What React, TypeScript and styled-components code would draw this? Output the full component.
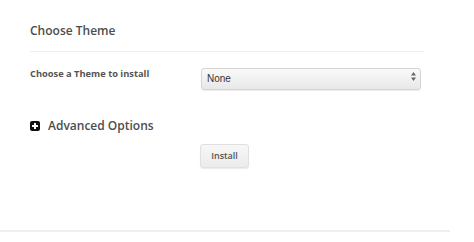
import React from "react";
import styled, { createGlobalStyle } from "styled-components";

const Global = createGlobalStyle`
  html, body { margin: 0; padding: 0; background: #fff; }
  body { font-family: "Open Sans", "Liberation Sans", sans-serif; color: #555; }
`;

const Page = styled.div`
  width: 450px;
  height: 232px;
  box-sizing: border-box;
  border-bottom: 2px solid #efefef;
  padding: 23px 26px 0 30px;
`;

const Heading = styled.h2`
  margin: 0;
  font-size: 12px;
  line-height: 16px;
  font-weight: 600;
  color: #4d4d4d;
  padding-bottom: 12px;
  border-bottom: 1px solid #eee;
`;

const FormRow = styled.div`
  display: grid;
  grid-template-columns: 171px 220px;
  align-items: start;
  margin-top: 13px;
`;

const Label = styled.label`
  font-size: 9.3px;
  font-weight: 700;
  line-height: 14px;
  color: #555;
  padding-top: 2px;
`;

const SelectWrap = styled.div`
  position: relative;
  width: 220px;
  height: 22px;
`;

const Select = styled.select`
  appearance: none;
  -webkit-appearance: none;
  width: 100%;
  height: 22px;
  margin: 0;
  box-sizing: border-box;
  border: 1px solid #d4d4d4;
  border-radius: 3px;
  background: linear-gradient(#fafafa, #e8e8e8);
  box-shadow: 0 1px 1px rgba(0,0,0,0.08);
  font-family: "Liberation Sans", Arial, sans-serif;
  font-size: 10px;
  color: #333;
  padding: 0 0 0 5px;
  outline: none;
`;

const Arrows = styled.svg`
  position: absolute;
  right: 5px;
  top: 7px;
  pointer-events: none;
`;

const Advanced = styled.div`
  display: flex;
  align-items: center;
  gap: 8px;
  margin-top: 31px;
  font-size: 12px;
  font-weight: 600;
  color: #4d4d4d;
  line-height: 16px;
`;

const PlusBox = styled.span`
  display: inline-flex;
  align-items: center;
  justify-content: center;
  width: 10px;
  height: 10px;
  border-radius: 2px;
  background: #111;
`;

const ButtonRow = styled.div`
  padding-left: 170px;
  margin-top: 8px;
`;

const Button = styled.button`
  width: 49px;
  height: 24px;
  border: 1px solid #e0e0e0;
  border-radius: 3px;
  background: linear-gradient(#f7f7f7, #ebebeb);
  box-shadow: 0 1px 1px rgba(0,0,0,0.08);
  font-family: "Open Sans", sans-serif;
  font-size: 9px;
  font-weight: 600;
  color: #555;
  padding: 0;
`;

export default function App() {
  return (
    <>
      <Global />
      <Page>
        <Heading>Choose Theme</Heading>
        <FormRow>
          <Label>Choose a Theme to install</Label>
          <SelectWrap>
            <Select defaultValue="none">
              <option value="none">None</option>
            </Select>
            <Arrows width="5" height="9" viewBox="0 0 5 9">
              <path d="M2.5 0 L5 3.5 L0 3.5 Z" fill="#666" />
              <path d="M2.5 9 L5 5.5 L0 5.5 Z" fill="#666" />
            </Arrows>
          </SelectWrap>
        </FormRow>
        <Advanced>
          <PlusBox>
            <svg width="6" height="6" viewBox="0 0 6 6">
              <path d="M2 0h2v2h2v2H4v2H2V4H0V2h2z" fill="#fff" />
            </svg>
          </PlusBox>
          Advanced Options
        </Advanced>
        <ButtonRow>
          <Button>Install</Button>
        </ButtonRow>
      </Page>
    </>
  );
}
